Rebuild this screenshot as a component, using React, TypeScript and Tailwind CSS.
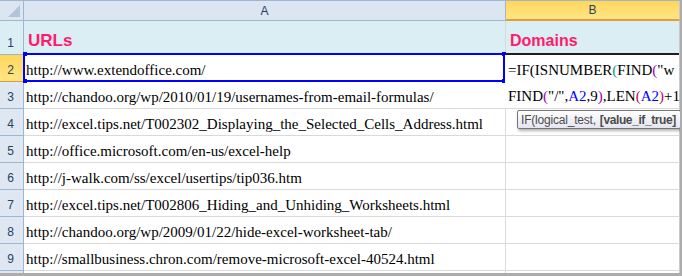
const urls = [
  'http://www.extendoffice.com/',
  'http://chandoo.org/wp/2010/01/19/usernames-from-email-formulas/',
  'http://excel.tips.net/T002302_Displaying_the_Selected_Cells_Address.html',
  'http://office.microsoft.com/en-us/excel-help',
  'http://j-walk.com/ss/excel/usertips/tip036.htm',
  'http://excel.tips.net/T002806_Hiding_and_Unhiding_Worksheets.html',
  'http://chandoo.org/wp/2009/01/22/hide-excel-worksheet-tab/',
  'http://smallbusiness.chron.com/remove-microsoft-excel-40524.html',
]

function RowHead({ n, active }: { n: number; active?: boolean }) {
  return (
    <div
      className={`w-[24px] shrink-0 border-r border-b flex items-end justify-center pb-[4px] pr-[2px] text-[12px] leading-[14px] font-['Liberation_Sans',sans-serif] ${
        active
          ? 'bg-gradient-to-b from-[#ffd65c] to-[#ffe684] border-[#e69a38] text-[#27415f]'
          : 'bg-[#dfe7f2] border-[#9eb6ce] text-[#27415f]'
      }`}
    >
      {n}
    </div>
  )
}

export default function App() {
  return (
    <div className="w-[682px] h-[276px] overflow-hidden bg-[#acacac] font-['Liberation_Serif',serif]">
      <div className="relative w-[680px] h-[273px] bg-white overflow-hidden">
        {/* column headers */}
        <div className="flex h-[21px] border-t border-[#9eb6ce] text-[12px] text-[#27415f] font-['Liberation_Sans',sans-serif]">
          <div className="w-[24px] shrink-0 border-r border-b border-[#9eb6ce] bg-[#dce6f2] flex items-end justify-end pr-[2px] pb-[2px]">
            <svg width="14" height="14" viewBox="0 0 14 14">
              <polygon points="13,1 13,13 1,13" fill="#b4c4d8" />
            </svg>
          </div>
          <div className="w-[482px] shrink-0 border-r border-b border-[#9eb6ce] bg-[#dce6f2] flex items-center justify-center">
            A
          </div>
          <div className="w-[174px] shrink-0 border-r border-b-2 border-r-[#c9c9c9] border-b-[#e69a38] bg-gradient-to-b from-[#ffd65c] to-[#ffe684] flex items-center justify-center">
            B
          </div>
        </div>

        {/* row 1 */}
        <div className="flex h-[34px] bg-[#daeef3]">
          <div className="w-[24px] shrink-0 border-r border-b border-[#9eb6ce] flex items-end justify-center pb-[4px] pr-[2px] text-[12px] leading-[14px] text-[#27415f] font-['Liberation_Sans',sans-serif]">
            1
          </div>
          <div className="w-[482px] shrink-0 border-r border-b border-[#d9d9d9] flex items-end pl-[4px] pb-[3px] font-['Liberation_Sans',sans-serif] font-bold text-[17px] leading-[20px] text-[#ff1a6e]">
            URLs
          </div>
          <div className="w-[174px] shrink-0 border-r border-b border-r-[#c9c9c9] border-b-[#d9d9d9] flex items-end pl-[4px] pb-[3px] font-['Liberation_Sans',sans-serif] font-bold text-[16px] leading-[20px] text-[#ff1a6e]">
            Domains
          </div>
        </div>

        {/* rows 2-9 */}
        {urls.map((u, i) => (
          <div key={u} className="flex h-[27px]">
            <RowHead n={i + 2} active={i === 0} />
            <div className="w-[482px] shrink-0 border-r border-b border-[#d9d9d9] flex items-end pl-[2px] pb-[2px] text-[15px] leading-[18px] text-black whitespace-nowrap">
              {u}
            </div>
            <div className="w-[174px] shrink-0 border-r border-b border-r-[#c9c9c9] border-b-[#d9d9d9]" />
          </div>
        ))}

        {/* row 10 stub */}
        <div className="flex h-[2px]">
          <div className="w-[24px] shrink-0 border-r border-[#9eb6ce] bg-[#dfe7f2]" />
          <div className="w-[482px] shrink-0 border-r border-[#d9d9d9]" />
          <div className="w-[174px] shrink-0 border-r border-[#c9c9c9]" />
        </div>

        {/* A2 range highlight */}
        <div className="absolute left-[23px] top-[53px] w-[482px] h-[29px] border-2 border-[#0000ff]" />
        <div className="absolute left-[23px] top-[52px] w-[4px] h-[4px] bg-[#0000ff]" />
        <div className="absolute left-[23px] top-[79px] w-[4px] h-[4px] bg-[#0000ff]" />
        <div className="absolute left-[502px] top-[52px] w-[4px] h-[4px] bg-[#0000ff]" />
        <div className="absolute left-[502px] top-[79px] w-[4px] h-[4px] bg-[#0000ff]" />

        {/* B2 in-cell editor */}
        <div className="absolute left-[505px] top-[53px] w-[174px] h-[55px] bg-white border-t-2 border-[#231c1a] pl-[3px] pt-[2px] text-[15px] leading-[26px] text-black whitespace-nowrap">
          <div>
            =IF(ISNUMBER<span className="text-[#00a07a]">(</span>FIND<span className="text-[#9b00c8]">(</span>"w
          </div>
          <div>
            FIND<span className="text-[#9b00c8]">(</span>"/",<span className="text-[#0000ff]">A2</span>,9<span className="text-[#9b00c8]">)</span>,LEN<span className="text-[#c8005a]">(</span><span className="text-[#0000ff]">A2</span><span className="text-[#c8005a]">)</span>+1
          </div>
        </div>

        {/* function tooltip */}
        <div className="absolute left-[517px] top-[110px] h-[19px] pl-[3px] pr-[4px] flex items-center whitespace-nowrap rounded-[2px] border border-[#767676] bg-gradient-to-b from-white to-[#e4e5f0] shadow-[1px_2px_3px_rgba(0,0,0,0.3)] font-['Liberation_Sans',sans-serif] text-[12px] leading-[16px] text-[#4c4c4c] tracking-[-0.2px]">
          IF(logical_test, <span className="ml-[4px] font-bold tracking-[-0.4px]">[value_if_true]</span>
        </div>
      </div>
    </div>
  )
}
